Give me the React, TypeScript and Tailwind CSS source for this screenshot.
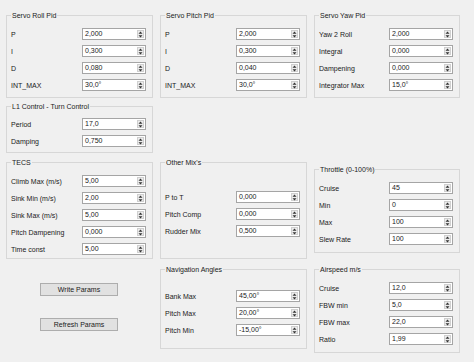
import React from 'react';

type Row = [string, string];

const Spin: React.FC<{ value: string }> = ({ value }) => (
  <div className="flex h-[12px] w-[64px] border border-[#a5a5a5] bg-white">
    <span className="flex-1 pl-[2px] text-[7px] leading-[10px] text-[#1a1a1a]">{value}</span>
    <div className="m-[1px] flex w-[7px] items-center justify-center border border-[#cfcfcf] bg-[#ececec]">
      <svg width="5" height="7" viewBox="0 0 5 7">
        <path d="M2.5 0.5 L4.5 2.8 L0.5 2.8 Z" fill="#333" />
        <path d="M2.5 6.5 L4.5 4.2 L0.5 4.2 Z" fill="#333" />
      </svg>
    </div>
  </div>
);

const Group: React.FC<{ title: string; rows: Row[]; className: string }> = ({ title, rows, className }) => (
  <div className={`relative border border-[#d7d7d7] ${className}`}>
    <span className="absolute left-[4px] top-[-5px] bg-[#f0f0f0] px-[1px] text-[7px] leading-[9px] text-[#1a1a1a]">
      {title}
    </span>
    <div className="flex flex-col gap-[5px] pl-[4px] pr-[6px]">
      {rows.map(([label, value]) => (
        <div key={label} className="flex h-[12px] items-center justify-between">
          <span className="text-[7px] leading-[9px] text-[#1a1a1a]">{label}</span>
          <Spin value={value} />
        </div>
      ))}
    </div>
  </div>
);

const Button: React.FC<{ label: string; className: string }> = ({ label, className }) => (
  <button
    className={`h-[13px] w-[78px] border border-[#adadad] bg-[#e1e1e1] text-[7px] leading-[11px] text-[#1a1a1a] ${className}`}
  >
    {label}
  </button>
);

export default function App() {
  return (
    <div
      className="flex h-[362px] w-[474px] gap-[7px] bg-[#f0f0f0] pl-[6px] pt-[15px]"
      style={{ fontFamily: '"Liberation Sans", Arial, sans-serif' }}
    >
      <div className="flex w-[147px] flex-col">
        <Group
          title="Servo Roll Pid"
          className="h-[83px] pt-[12px]"
          rows={[
            ['P', '2,000'],
            ['I', '0,300'],
            ['D', '0,080'],
            ['INT_MAX', '30,0°'],
          ]}
        />
        <Group
          title="L1 Control - Turn Control"
          className="mt-[8px] h-[47px] pt-[11px]"
          rows={[
            ['Period', '17,0'],
            ['Damping', '0,750'],
          ]}
        />
        <Group
          title="TECS"
          className="mt-[9px] h-[97px] pt-[12px]"
          rows={[
            ['Climb Max (m/s)', '5,00'],
            ['Sink Min (m/s)', '2,00'],
            ['Sink Max (m/s)', '5,00'],
            ['Pitch Dampening', '0,000'],
            ['Time const', '5,00'],
          ]}
        />
        <Button label="Write Params" className="ml-[34px] mt-[24px]" />
        <Button label="Refresh Params" className="ml-[34px] mt-[22px]" />
      </div>

      <div className="flex w-[147px] flex-col">
        <Group
          title="Servo Pitch Pid"
          className="h-[83px] pt-[12px]"
          rows={[
            ['P', '2,000'],
            ['I', '0,300'],
            ['D', '0,040'],
            ['INT_MAX', '30,0°'],
          ]}
        />
        <Group
          title="Other Mix's"
          className="mt-[64px] h-[97px] pt-[28px]"
          rows={[
            ['P to T', '0,000'],
            ['Pitch Comp', '0,000'],
            ['Rudder Mix', '0,500'],
          ]}
        />
        <Group
          title="Navigation Angles"
          className="mt-[10px] h-[80px] pt-[20px]"
          rows={[
            ['Bank Max', '45,00°'],
            ['Pitch Max', '20,00°'],
            ['Pitch Min', '-15,00°'],
          ]}
        />
      </div>

      <div className="flex w-[146px] flex-col">
        <Group
          title="Servo Yaw Pid"
          className="h-[83px] pt-[12px]"
          rows={[
            ['Yaw 2 Roll', '2,000'],
            ['Integral', '0,000'],
            ['Dampening', '0,000'],
            ['Integrator Max', '15,0°'],
          ]}
        />
        <Group
          title="Throttle (0-100%)"
          className="mt-[71px] h-[84px] pt-[12px]"
          rows={[
            ['Cruise', '45'],
            ['Min', '0'],
            ['Max', '100'],
            ['Slew Rate', '100'],
          ]}
        />
        <Group
          title="Airspeed m/s"
          className="mt-[16px] h-[84px] pt-[12px]"
          rows={[
            ['Cruise', '12,0'],
            ['FBW min', '5,0'],
            ['FBW max', '22,0'],
            ['Ratio', '1,99'],
          ]}
        />
      </div>
    </div>
  );
}
